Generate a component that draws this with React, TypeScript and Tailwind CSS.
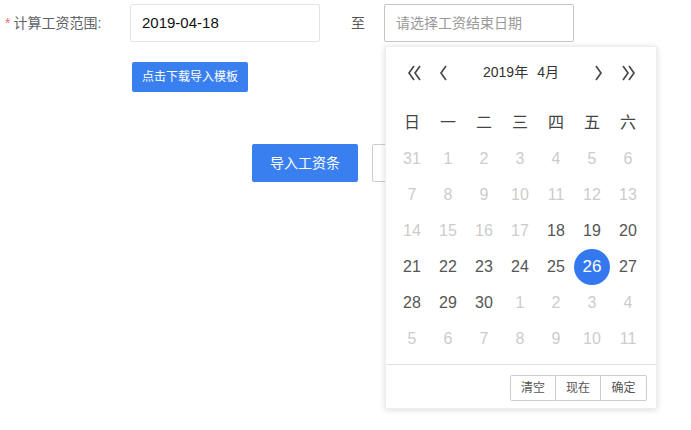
import React from 'react'

const font = { fontFamily: '"Liberation Sans", "Noto Sans CJK SC", sans-serif' }

const weekDays = ['日', '一', '二', '三', '四', '五', '六']

type Day = { n: number; cur: boolean; sel?: boolean }

function buildDays(): Day[] {
  const days: Day[] = [{ n: 31, cur: false }]
  for (let i = 1; i <= 30; i++) days.push({ n: i, cur: i >= 18, sel: i === 26 })
  for (let i = 1; i <= 11; i++) days.push({ n: i, cur: false })
  return days
}

function Chevron({ double, dir }: { double?: boolean; dir: 'l' | 'r' }) {
  const pts = dir === 'l' ? ['8,1 3,8 8,15', '14,1 9,8 14,15'] : ['3,1 8,8 3,15', '9,1 14,8 9,15']
  const single = dir === 'l' ? '10,1 5,8 10,15' : '6,1 11,8 6,15'
  return (
    <svg width="17" height="16" viewBox="0 0 17 16" fill="none" stroke="#4a4a4a" strokeWidth="1.7">
      {double ? pts.map((p) => <polyline key={p} points={p} />) : <polyline points={single} />}
    </svg>
  )
}

function DatePanel() {
  const days = buildDays()
  return (
    <div className="absolute left-[385px] top-[46px] w-[272px] h-[363px] bg-white border border-[#eeeeee] shadow-[0_1px_6px_rgba(0,0,0,0.15)]">
      <div className="h-[46px] pt-[5px] flex items-center text-[#333] text-[14px]">
        <span className="ml-[20px] flex"><Chevron double dir="l" /></span>
        <span className="ml-[13px] flex"><Chevron dir="l" /></span>
        <span className="ml-[30px]">2019年</span>
        <span className="ml-[9px]">4月</span>
        <span className="ml-[31px] flex"><Chevron dir="r" /></span>
        <span className="ml-[13px] flex"><Chevron double dir="r" /></span>
      </div>
      <div className="ml-[8px] mt-[12px] grid grid-cols-[repeat(7,36px)] auto-rows-[36px] text-[16px]">
        {weekDays.map((w) => (
          <div key={w} className="flex items-center justify-center text-[#444]">{w}</div>
        ))}
        {days.map((d, i) => (
          <div key={i} className="flex items-center justify-center">
            {d.sel ? (
              <span className="w-[36px] h-[36px] rounded-full bg-[#3478f0] text-white flex items-center justify-center text-[17px]">{d.n}</span>
            ) : (
              <span className={d.cur ? 'text-[#555]' : 'text-[#cccccc]'}>{d.n}</span>
            )}
          </div>
        ))}
      </div>
      <div className="mt-[7px] border-t border-[#e2e2e2] flex justify-end pt-[10px] pr-[9px]">
        <div className="flex text-[12px] text-[#555]">
          <button className="w-[46px] h-[26px] border border-[#cccccc] rounded-l-[2px] bg-white">清空</button>
          <button className="w-[45px] h-[26px] border border-l-0 border-[#cccccc] bg-white">现在</button>
          <button className="w-[46px] h-[26px] border border-l-0 border-[#cccccc] rounded-r-[2px] bg-white">确定</button>
        </div>
      </div>
    </div>
  )
}

export default function App() {
  return (
    <div className="relative w-[691px] h-[430px] bg-white overflow-hidden" style={font}>
      <div className="flex items-center pt-[4px]">
        <div className="w-[130px] pl-[5px] text-[14px] text-[#606266] flex items-center">
          <span className="text-[#f56c6c] mr-[3px]">*</span>
          <span>计算工资范围:</span>
        </div>
        <div className="w-[190px] h-[38px] border border-[#e4e4e4] rounded-[2px] flex items-center pl-[11px] text-[15px] text-[#111]">
          2019-04-18
        </div>
        <div className="w-[64px] pl-[12px] text-center text-[14px] text-[#555]">至</div>
        <div className="w-[190px] h-[38px] border border-[#c4c4c4] rounded-[2px] flex items-center pl-[11px] text-[14px] text-[#999]">
          请选择工资结束日期
        </div>
      </div>
      <div className="ml-[132px] mt-[20px]">
        <button className="w-[116px] h-[30px] bg-[#3a7ff0] rounded-[2px] text-white text-[12px]">点击下载导入模板</button>
      </div>
      <div className="ml-[252px] mt-[52px] flex gap-[14px]">
        <button className="w-[106px] h-[38px] bg-[#3a7ff0] rounded-[2px] text-white text-[14px]">导入工资条</button>
        <button className="w-[106px] h-[38px] border border-[#cccccc] rounded-[2px] bg-white" />
      </div>
      <DatePanel />
    </div>
  )
}
